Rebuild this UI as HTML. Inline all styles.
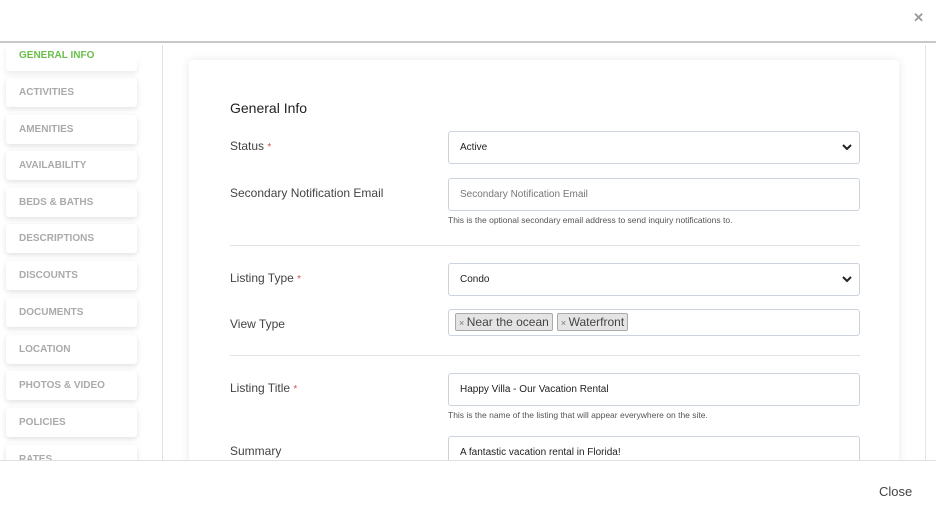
<!DOCTYPE html>
<html><head><style>
*{box-sizing:border-box;margin:0;padding:0}
body{width:936px;height:516px;overflow:hidden;background:#fff;font-family:"Liberation Sans",sans-serif;position:relative}
.abs{position:absolute}
.hdr{left:0;top:0;width:936px;height:43px;border-bottom:2px solid #c8c8c8}
.x{right:12px;top:10px;color:#999;font-size:13px;font-weight:bold}
.side{left:0;top:45px;width:163px;height:415px;border-right:1px solid #e2e2e2;overflow:hidden}
.it{position:absolute;left:6px;width:131px;height:29px;background:#fff;box-shadow:0 2px 6px rgba(0,0,0,.12);border-radius:3px;font-size:10px;font-weight:bold;color:#aaa;padding-left:13px;line-height:29px}
.rl{left:925px;top:45px;width:1px;height:415px;background:#e4e4e4}
.card{left:189px;top:60px;width:710px;height:420px;background:#fff;box-shadow:0 0 10px rgba(0,0,0,.09);border-radius:3px}
.lbl{position:absolute;left:230px;font-size:12px;color:#444}
.req{color:#d9534f;font-size:10px}
.inp{position:absolute;left:448px;width:412px;height:33px;border:1px solid #ccd3dc;border-radius:3px;font-size:10px;color:#222;padding-left:11px;line-height:31px;background:#fff}
.help{position:absolute;left:448px;font-size:8.5px;color:#555}
.hr{position:absolute;left:230px;width:630px;height:1px;background:#e2e2e2}
.chev{position:absolute;right:6px;top:10px}
.tag{display:inline-block;border:1px solid #aaa;background:#e4e4e4;border-radius:2px;height:18px;line-height:16px;font-size:12px;color:#444;padding:0 3px;margin-right:4px}
.ft{left:0;top:460px;width:936px;height:56px;border-top:1px solid #e0e0e0;background:#fff}
</style></head><body>
<div class="abs hdr"></div>
<div class="abs x">✕</div>
<div class="abs side">
<div class="it" style="top:0;height:26px;line-height:22px;color:#6abf4b;box-shadow:0 3px 6px rgba(0,0,0,.08)">GENERAL INFO</div>
<div class="abs" style="left:137px;top:0;width:0;height:0;border-top:9px solid transparent;border-bottom:9px solid transparent;border-left:7px solid #fff"></div>
<div class="it" style="top:33px">ACTIVITIES</div>
<div class="it" style="top:70px">AMENITIES</div>
<div class="it" style="top:106px">AVAILABILITY</div>
<div class="it" style="top:143px">BEDS &amp; BATHS</div>
<div class="it" style="top:179px">DESCRIPTIONS</div>
<div class="it" style="top:216px">DISCOUNTS</div>
<div class="it" style="top:253px">DOCUMENTS</div>
<div class="it" style="top:290px">LOCATION</div>
<div class="it" style="top:326px">PHOTOS &amp; VIDEO</div>
<div class="it" style="top:363px">POLICIES</div>
<div class="it" style="top:400px">RATES</div>
</div>
<div class="abs rl"></div>
<div class="abs card"></div>
<div class="lbl" style="top:100px;font-size:14px;color:#222">General Info</div>
<div class="lbl" style="top:139px">Status <span class="req">*</span></div>
<div class="inp" style="top:131px">Active<svg class="chev" width="12" height="10" viewBox="0 0 12 10"><path d="M2 3l4 4 4-4" stroke="#222" stroke-width="2" fill="none"/></svg></div>
<div class="lbl" style="top:186px">Secondary Notification Email</div>
<div class="inp" style="top:178px;color:#777">Secondary Notification Email</div>
<div class="help" style="top:215px">This is the optional secondary email address to send inquiry notifications to.</div>
<div class="hr" style="top:245px"></div>
<div class="lbl" style="top:271px">Listing Type <span class="req">*</span></div>
<div class="inp" style="top:263px">Condo<svg class="chev" width="12" height="10" viewBox="0 0 12 10"><path d="M2 3l4 4 4-4" stroke="#222" stroke-width="2" fill="none"/></svg></div>
<div class="lbl" style="top:317px">View Type</div>
<div class="inp" style="top:309px;height:27px;padding-left:6px;line-height:23px;padding-top:2px"><span class="tag"><span style="font-size:9px;color:#777">× </span>Near the ocean</span><span class="tag"><span style="font-size:9px;color:#777">× </span>Waterfront</span></div>
<div class="hr" style="top:355px"></div>
<div class="lbl" style="top:381px">Listing Title <span class="req">*</span></div>
<div class="inp" style="top:373px">Happy Villa - Our Vacation Rental</div>
<div class="help" style="top:410px">This is the name of the listing that will appear everywhere on the site.</div>
<div class="lbl" style="top:444px">Summary</div>
<div class="inp" style="top:436px">A fantastic vacation rental in Florida!</div>
<div class="abs ft"></div>
<div class="abs" style="left:879px;top:484px;font-size:13px;color:#444">Close</div>
</body></html>
